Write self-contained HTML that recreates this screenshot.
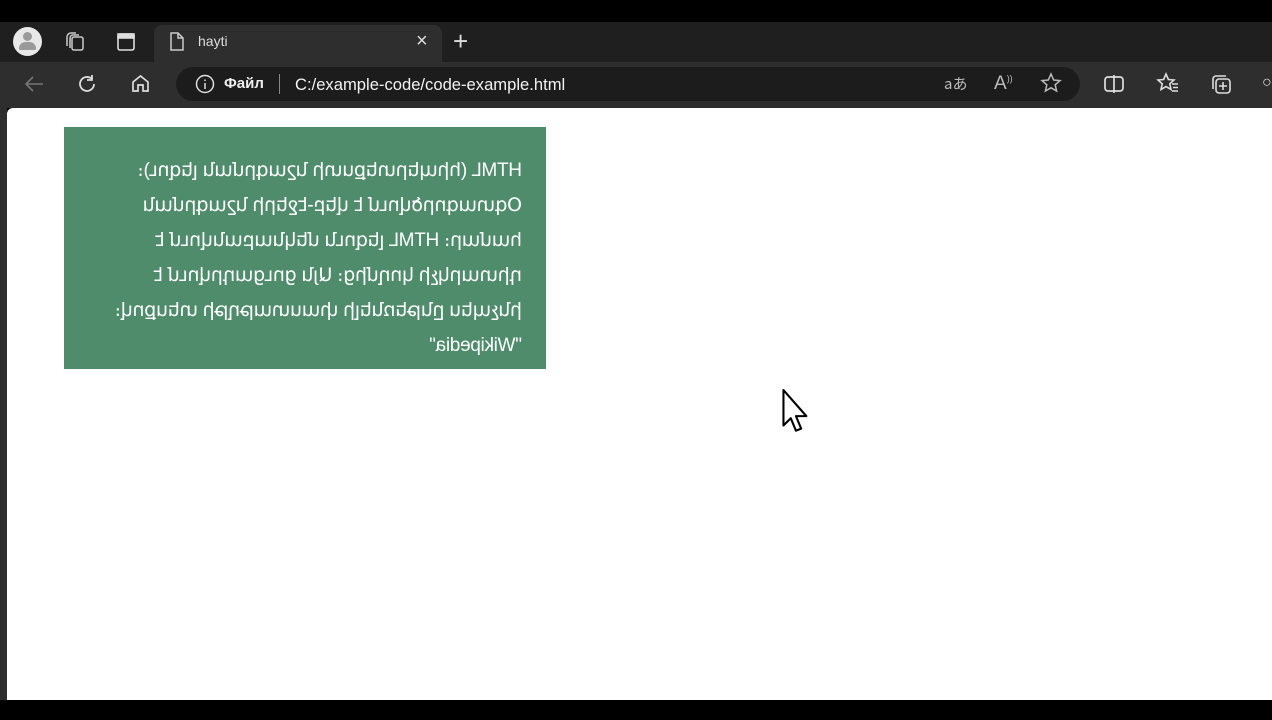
<!DOCTYPE html><html><head><meta charset="utf-8"><style>
*{margin:0;padding:0;box-sizing:border-box}
body{width:1272px;height:720px;background:#000;position:relative;overflow:hidden;font-family:"Liberation Sans",sans-serif}
.abs{position:absolute}
</style></head><body>
<div class="abs" style="left:0;top:22px;width:1272px;height:40px;background:#1f1f1f"></div>
<div class="abs" style="left:154px;top:25px;width:288px;height:37px;background:#2e2e2e;border-radius:8px 8px 0 0"></div>
<div class="abs" style="left:0;top:62px;width:1272px;height:46px;background:#2e2e2e"></div>
<div class="abs" style="left:0;top:108px;width:7px;height:592px;background:#2e2e2e"></div>
<div class="abs" style="left:7px;top:108px;width:1265px;height:592px;background:#fff;border-radius:6px 0 0 0"></div>
<div class="abs" style="left:13px;top:27px;width:29px;height:29px;border-radius:50%;background:#e8e8e8"></div>
<div class="abs" style="left:23px;top:32px;width:9px;height:9px;border-radius:50%;background:#9a9a9a"></div>
<div class="abs" style="left:19px;top:42px;width:17px;height:8px;border-radius:8px 8px 2px 2px;background:#9a9a9a"></div>
<svg class="abs" style="left:64px;top:31px" width="22" height="22" viewBox="0 0 22 22" fill="none" stroke="#ccc" stroke-width="1.5"><rect x="8" y="6" width="11" height="13" rx="2"/><path d="M6 17 V7 a3 3 0 0 1 3-3 h6"/><path d="M3 15 V6 a4 4 0 0 1 4-4 h5"/></svg>
<svg class="abs" style="left:116px;top:32px" width="20" height="20" viewBox="0 0 20 20" fill="none" stroke="#ddd" stroke-width="1.6"><rect x="2" y="2" width="16" height="16" rx="2"/><rect x="2" y="2" width="16" height="4" fill="#ddd"/></svg>
<svg class="abs" style="left:168px;top:31px" width="18" height="21" viewBox="0 0 18 21" fill="none" stroke="#ccc" stroke-width="1.5"><path d="M3 2 h7 l5 5 v12 h-12 z M10 2 v5 h5"/></svg>
<div class="abs" style="left:198px;top:33px;color:#ddd;font-size:14px">hayti</div>
<div class="abs" style="left:416px;top:30px;color:#ddd;font-size:20px">×</div>
<div class="abs" style="left:453px;top:26px;color:#ddd;font-size:26px;font-weight:300">+</div>
<svg class="abs" style="left:23px;top:74px" width="22" height="20" viewBox="0 0 22 20" fill="none" stroke="#777" stroke-width="1.6"><path d="M20 10 H3 M10 3 L3 10 L10 17"/></svg>
<svg class="abs" style="left:76px;top:73px" width="22" height="22" viewBox="0 0 22 22" fill="none" stroke="#ddd" stroke-width="1.8"><path d="M18 11 a7 7 0 1 1 -2.5 -5.4"/><path d="M16 2 v5 h-5"/></svg>
<svg class="abs" style="left:130px;top:73px" width="21" height="21" viewBox="0 0 21 21" fill="none" stroke="#ddd" stroke-width="1.7"><path d="M3 9 L10.5 3 L18 9 V18 H13 V12 H8 V18 H3 Z"/></svg>
<div class="abs" style="left:176px;top:67px;width:904px;height:34px;border-radius:17px;background:#1c1c1c"></div>
<svg class="abs" style="left:195px;top:74px" width="20" height="20" viewBox="0 0 20 20" fill="none" stroke="#ddd" stroke-width="1.5"><circle cx="10" cy="10" r="8.5"/><path d="M10 9 v6 M10 5.5 v1.5"/></svg>
<div class="abs" style="left:224px;top:75px;color:#eee;font-size:15px;font-weight:bold">Файл</div>
<div class="abs" style="left:279px;top:74px;width:1px;height:20px;background:#888"></div>
<div class="abs" style="left:295px;top:75px;color:#f2f2f2;font-size:16.6px">C:/example-code/code-example.html</div>
<div class="abs" style="left:944px;top:73px;color:#bbb;font-size:15px;font-family:'Noto Sans CJK JP',sans-serif">aあ</div>
<div class="abs" style="left:994px;top:73px;color:#bbb;font-size:19px">A<sup style="font-size:9px">))</sup></div>
<svg class="abs" style="left:1040px;top:72px" width="22" height="22" viewBox="0 0 22 22" fill="none" stroke="#bbb" stroke-width="1.5"><path d="M11 2 L13.7 8 L20 8.6 L15.2 12.8 L16.6 19 L11 15.8 L5.4 19 L6.8 12.8 L2 8.6 L8.3 8 Z"/></svg>
<svg class="abs" style="left:1103px;top:73px" width="22" height="22" viewBox="0 0 22 22" fill="none" stroke="#ddd" stroke-width="1.7"><rect x="2" y="4" width="18" height="14" rx="3"/><path d="M11 2 V20"/></svg>
<svg class="abs" style="left:1156px;top:72px" width="24" height="22" viewBox="0 0 24 22" fill="none" stroke="#ddd" stroke-width="1.6"><path d="M10 2 L12.4 7.5 L18 8 L13.8 11.8 L15 17.5 L10 14.6 L5 17.5 L6.2 11.8 L2 8 L7.6 7.5 Z"/><path d="M16 12 h6 M17 15.5 h5 M16 19 h6"/></svg>
<svg class="abs" style="left:1209px;top:72px" width="24" height="24" viewBox="0 0 24 24" fill="none" stroke="#ddd" stroke-width="1.6"><rect x="7" y="7" width="14" height="14" rx="3"/><path d="M4 17 V7 a3 3 0 0 1 3-3 h10 M14 10 v8 M10 14 h8"/></svg>
<div class="abs" style="left:1262px;top:74px;color:#ddd;font-size:16px">○</div>
<div class="abs" style="left:64px;top:127px;width:482px;height:242px;background:#4f8c6b;transform:scaleX(-1)">
<div style="position:absolute;left:24px;top:26px;color:#fff;font-size:19px;line-height:35px;white-space:nowrap;font-family:'Liberation Sans','DejaVu Sans',sans-serif;letter-spacing:-0.3px">HTML (հիպերտեքստի նշագրման լեզու)։<br>Օգտագործվում է վեբ-էջերի նշագրման<br>համար։ HTML լեզուն մեկնաբանվում է<br>դիտարկչի կողմից։ Այն ցուցադրվում է<br>ինչպես ընթեռնելի փաստաթղթի տեսքով։<br>"Wikipedia"</div>
</div>
<svg class="abs" style="left:780px;top:388px" width="34" height="50" viewBox="0 0 32 48"><path d="M3 2 V36 L10 29 L15 41 L20 39 L15 27 H25 Z" fill="#fff" stroke="#000" stroke-width="2" stroke-linejoin="round"/></svg>
</body></html>
